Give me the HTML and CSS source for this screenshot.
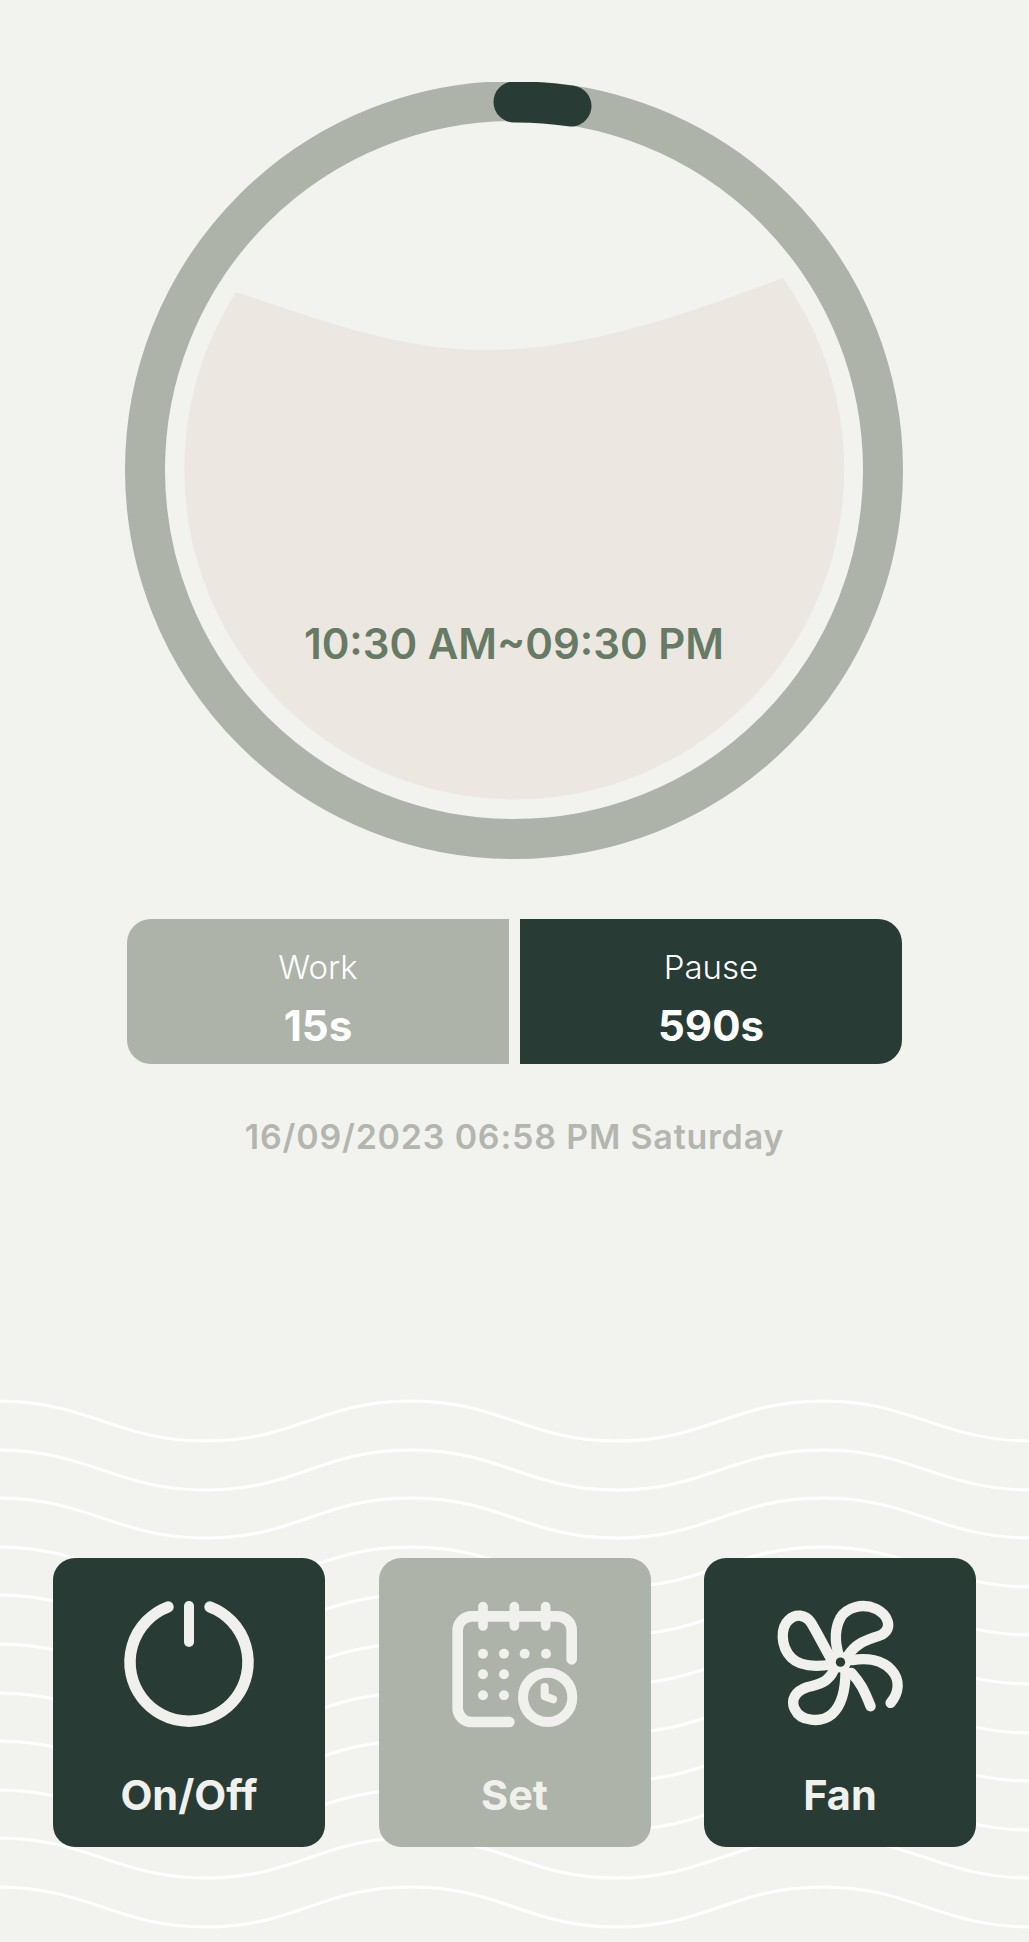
FILE: index.html
```html
<!DOCTYPE html>
<html lang="en">
<head>
  <meta charset="UTF-8" />
  <meta name="viewport" content="width=device-width,initial-scale=1.0"/>
  <title>Timer</title>
  <link rel="stylesheet" href="styles.css">
</head>
<body>

<!-- Dial -->
<section class="dial">
  <svg class="dial-svg" width="778" height="778" viewBox="125 82 778 778">
    <circle cx="514" cy="470" r="369" fill="none" stroke="#aeb3aa" stroke-width="40"/>
    <path d="M514 102 A369 369 0 0 1 571 106" fill="none" stroke="#283b34" stroke-width="41" stroke-linecap="round"/>
    <path d="M236 292 C320 320 400 350 485 350 C590 350 690 312 783 278 A330 330 0 1 1 236 292 Z" fill="#ece8e1"/>
  </svg>
  <div class="dial-time">10:30 AM~09:30 PM</div>
</section>

<!-- Work / Pause -->
<section class="cycle">
  <div class="cycle-item cycle-work">
    <span class="cycle-label">Work</span>
    <span class="cycle-value">15s</span>
  </div>
  <div class="cycle-item cycle-pause">
    <span class="cycle-label">Pause</span>
    <span class="cycle-value">590s</span>
  </div>
</section>

<p class="date">16/09/2023 06:58 PM Saturday</p>

<!-- Buttons on top of the wave lines -->
<section class="controls">
  <svg class="waves" width="1029" height="562" viewBox="0 0 1029 562">
    <defs>
      <path id="wave" d="M-4 21 C90 21 116 61 206 61 C296 61 321 21 411 21 C501 21 527 61 617 61 C707 61 733 21 823 21 C913 21 939 61 1033 61" fill="none" stroke="#fff" stroke-width="3"/>
    </defs>
    <use href="#wave"/>
    <use href="#wave" y="49"/>
    <use href="#wave" y="97"/>
    <use href="#wave" y="146"/>
    <use href="#wave" y="194"/>
    <use href="#wave" y="243"/>
    <use href="#wave" y="292"/>
    <use href="#wave" y="340"/>
    <use href="#wave" y="389"/>
    <use href="#wave" y="437"/>
    <use href="#wave" y="486"/>
  </svg>

  <div class="btn-row">
    <button class="ctl-btn dark">
      <svg class="ctl-icon" width="128" height="128" viewBox="0 0 128 128" fill="none" stroke="#f0f0ed" stroke-linecap="round">
        <path d="M43 7 A59 59 0 1 0 85 7" stroke-width="11.500"/>
        <path d="M64 6 V42" stroke-width="10"/>
      </svg>
      <span class="ctl-label">On/Off</span>
    </button>

    <button class="ctl-btn light">
      <svg class="ctl-icon" width="125" height="128" viewBox="0 -6 375 384" fill="none" stroke="#f0f0ed" stroke-linecap="round" stroke-linejoin="round">
        <path d="M359 172 V85 A42 42 0 0 0 317 43 H59 A42 42 0 0 0 17 85 V318 A42 42 0 0 0 59 360 H172" stroke-width="32"/>
        <path d="M93 14 V72 M187 14 V72 M281 14 V72" stroke-width="29"/>
        <circle cx="287" cy="286" r="74" stroke-width="30"/>
        <path d="M278 255 V283 L303 292" stroke-width="24"/>
        <g fill="#f0f0ed" stroke="none">
          <circle cx="93" cy="155" r="15"/>
          <circle cx="156" cy="155" r="15"/>
          <circle cx="218" cy="155" r="15"/>
          <circle cx="282" cy="155" r="15"/>
          <circle cx="93" cy="217" r="15"/>
          <circle cx="156" cy="217" r="15"/>
          <circle cx="93" cy="280" r="15"/>
          <circle cx="156" cy="280" r="15"/>
        </g>
      </svg>
      <span class="ctl-label">Set</span>
    </button>

    <button class="ctl-btn dark">
      <svg class="ctl-icon" width="127" height="128" viewBox="255 182 380 383" fill="none" stroke="#f0f0ed" stroke-width="31" stroke-linecap="round">
        <path d="M440 348 C430 315 426 270 445 235 C462 205 510 190 550 208 C590 228 600 265 570 285 C530 302 495 305 468 348"/>
        <path d="M415 355 C395 320 378 285 357 250 C340 225 310 222 290 242 C265 265 265 320 298 355 C325 383 375 382 420 375"/>
        <path d="M425 392 C410 425 385 435 345 443 C310 455 295 480 308 508 C325 545 385 552 420 523 C450 495 460 450 460 395"/>
        <path d="M478 400 C505 430 515 450 535 500"/>
        <path d="M480 362 C525 354 570 362 598 392 C625 422 620 460 595 490"/>
        <circle cx="445" cy="368" r="31" fill="#f0f0ed" stroke="none"/>
        <circle cx="445" cy="368" r="14" fill="#283b34" stroke="none"/>
      </svg>
      <span class="ctl-label">Fan</span>
    </button>
  </div>
</section>

</body>
</html>
```

FILE: styles.css
```css
* {
  margin: 0;
  padding: 0;
  box-sizing: border-box;
}
body {
  font-family: Inter, "Liberation Sans", sans-serif;
  background: #f2f3ef;
  width: 1029px;
  height: 1942px;
  overflow: hidden;
}

/* Dial */
.dial {
  position: relative;
  width: 778px;
  height: 778px;
  margin: 82px auto 0 125px;
}
.dial-svg {
  display: block;
}
.dial-time {
  position: absolute;
  left: 0;
  right: 0;
  top: 537px;
  text-align: center;
  font-size: 42px;
  line-height: 50px;
  font-weight: 600;
  color: #667a65;
}

/* Work / Pause */
.cycle {
  display: flex;
  gap: 11px;
  margin: 59px 127px 0 127px;
  height: 145px;
}
.cycle-item {
  flex: 1;
  display: flex;
  flex-direction: column;
  align-items: center;
  color: #fff;
  padding-top: 29px;
}
.cycle-work {
  background: #aeb3aa;
  border-radius: 24px 0 0 24px;
}
.cycle-pause {
  background: #283b34;
  border-radius: 0 24px 24px 0;
}
.cycle-label {
  font-size: 33px;
  line-height: 38px;
  font-weight: 300;
}
.cycle-value {
  font-size: 42px;
  line-height: 50px;
  font-weight: 700;
  margin-top: 15px;
}

.date {
  margin-top: 53px;
  text-align: center;
  font-size: 34px;
  line-height: 40px;
  font-weight: 600;
  letter-spacing: 0.8px;
  color: #b2b6af;
}

/* Bottom */
.controls {
  position: absolute;
  left: 0;
  top: 1380px;
  width: 1029px;
  height: 562px;
}
.waves {
  position: absolute;
  left: 0;
  top: 0;
}
.btn-row {
  position: relative;
  display: flex;
  gap: 53.5px;
  padding: 178px 0 0 53px;
}
.ctl-btn {
  width: 272px;
  height: 289px;
  border: none;
  border-radius: 22px;
  display: flex;
  flex-direction: column;
  align-items: center;
  font-family: inherit;
  color: #f0f0ed;
}
.ctl-btn.dark {
  background: #283b34;
}
.ctl-btn.light {
  background: #aeb3aa;
}
.ctl-icon {
  display: block;
  margin-top: 42px;
  overflow: visible;
}
.ctl-label {
  font-size: 41.5px;
  line-height: 48px;
  font-weight: 700;
  margin-top: 43px;
}
```
